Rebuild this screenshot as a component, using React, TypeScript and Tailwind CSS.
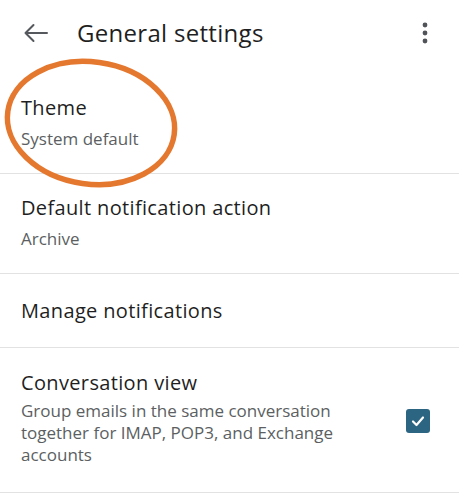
import React from "react";

function Row({ title, sub, className }: { title: string; sub?: string; className: string }) {
  return (
    <div className={`border-b border-[#e2e2e2] pl-[21px] ${className}`}>
      <div className="text-[20px] leading-[26px] tracking-[0.35px] text-[#1f1f1f]">{title}</div>
      {sub && <div className="mt-[7px] text-[17px] leading-[22px] text-[#5c5f62]">{sub}</div>}
    </div>
  );
}

export default function App() {
  return (
    <div className="relative w-[459px] h-[500px] overflow-hidden bg-white font-['Open_Sans',sans-serif]">
      <div className="flex h-[66px] items-center">
        <svg width="24" height="24" viewBox="0 0 24 24" className="ml-[24px]">
          <path d="M1.5 12H23M9.5 4L1.5 12L9.5 20" fill="none" stroke="#55585c" strokeWidth="2" strokeLinecap="round" strokeLinejoin="round" />
        </svg>
        <div className="ml-[29px] text-[24px] leading-[32px] tracking-[0.3px] text-[#1f1f1f]">General settings</div>
        <div className="flex-1" />
        <svg width="8" height="24" viewBox="0 0 8 24" className="mr-[30px]">
          <circle cx="4" cy="4" r="2.4" fill="#505357" />
          <circle cx="4" cy="12" r="2.4" fill="#505357" />
          <circle cx="4" cy="20" r="2.4" fill="#505357" />
        </svg>
      </div>
      <Row title="Theme" sub="System default" className="h-[108px] pt-[29px]" />
      <Row title="Default notification action" sub="Archive" className="h-[100px] pt-[21px]" />
      <Row title="Manage notifications" className="h-[74px] pt-[24px]" />
      <div className="flex h-[145px] border-b border-[#e2e2e2] pl-[21px] pt-[22px]">
        <div className="w-[345px]">
          <div className="text-[20px] leading-[26px] tracking-[0.35px] text-[#1f1f1f]">Conversation view</div>
          <div className="mt-[4px] text-[17px] leading-[22px] text-[#5c5f62]">
            Group emails in the same conversation together for IMAP, POP3, and Exchange accounts
          </div>
        </div>
        <div className="ml-[40px] mt-[39px] flex h-[24px] w-[24px] items-center justify-center rounded-[3px] bg-[#2b6582]">
          <svg width="16" height="16" viewBox="0 0 16 16">
            <path d="M3 8.5L6.5 12L13 4.5" fill="none" stroke="white" strokeWidth="2.2" strokeLinecap="round" strokeLinejoin="round" />
          </svg>
        </div>
      </div>
      <svg className="pointer-events-none absolute left-0 top-0" width="459" height="500">
        <ellipse cx="91" cy="123" rx="84" ry="61" transform="rotate(8 91 123)" fill="none" stroke="#e5782f" strokeWidth="5.5" />
      </svg>
    </div>
  );
}
